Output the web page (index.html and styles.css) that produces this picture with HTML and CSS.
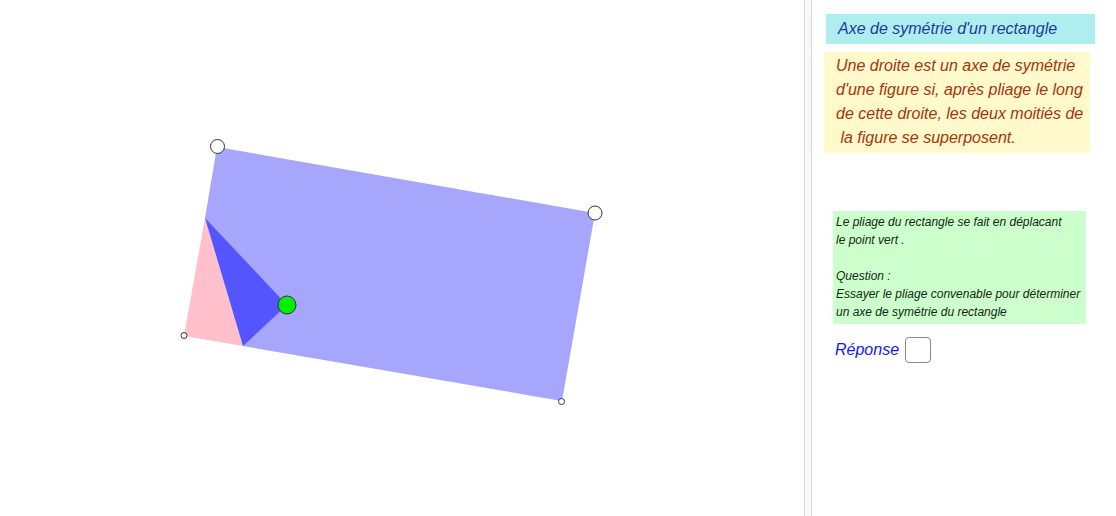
FILE: index.html
```html
<!DOCTYPE html>
<html lang="fr">
<head>
<meta charset="utf-8">
<link rel="stylesheet" href="styles.css">
</head>
<body>
<div class="app">
  <div class="canvas">
    <svg width="804" height="516" viewBox="0 0 804 516">
      <polygon points="217,147 595,213 562,401 243,346 205,218" fill="#a6a6fd"/>
      <polygon points="205,218 184,336 243,346" fill="#ffc0cb"/>
      <polygon points="205,218 287,305 243,346" fill="#5555fd"/>
      <circle cx="217.5" cy="146.5" r="7" fill="#fff" stroke="#333" stroke-width="1"/>
      <circle cx="595" cy="213" r="7" fill="#fff" stroke="#333" stroke-width="1"/>
      <circle cx="184" cy="335.5" r="3" fill="#fff" stroke="#333" stroke-width="1"/>
      <circle cx="561.5" cy="401.5" r="3" fill="#fff" stroke="#333" stroke-width="1"/>
      <circle cx="287" cy="305" r="9" fill="#00ee00" stroke="#333" stroke-width="1"/>
    </svg>
  </div>
  <div class="divider"></div>
  <div class="panel">
    <div class="title">Axe de symétrie d'un rectangle</div>
    <div class="definition">Une droite est un axe de symétrie<br>d'une figure si, après pliage le long<br>de cette droite, les deux moitiés de<br>&nbsp;la figure se superposent.</div>
    <div class="note">Le pliage du rectangle se fait en déplacant<br>le point vert .<br><br>Question :<br>Essayer le pliage convenable pour déterminer<br>un axe de symétrie du rectangle</div>
    <div class="answer"><span class="answer-label">Réponse</span><span class="answer-box"></span></div>
  </div>
</div>
</body>
</html>
```
FILE: styles.css
```css
html, body {
  margin: 0;
  padding: 0;
  background: #fff;
}
.app {
  display: flex;
  width: 1116px;
  height: 516px;
  overflow: hidden;
  font-family: "Liberation Sans", Arial, sans-serif;
}
.canvas {
  width: 804px;
  height: 516px;
  flex: none;
}
.canvas svg {
  display: block;
}
.divider {
  width: 6px;
  flex: none;
  border-left: 1px solid #d6d6d6;
  border-right: 1px solid #d6d6d6;
  background: #f7f7f7;
}
.panel {
  flex: 1;
  padding-top: 14px;
}
.title {
  margin-left: 14px;
  width: 257px;
  height: 30px;
  line-height: 30px;
  padding-left: 12px;
  background: #afeeee;
  color: #1a3c9e;
  font-size: 16px;
  font-style: italic;
}
.definition {
  margin-top: 8px;
  margin-left: 12px;
  width: 254px;
  height: 98px;
  padding: 2px 0 1px 12px;
  background: #fff9cc;
  color: #a3360c;
  font-size: 16px;
  font-style: italic;
  line-height: 24px;
}
.note {
  margin-top: 58px;
  margin-left: 21px;
  width: 250px;
  height: 108px;
  padding: 2px 0 3px 3px;
  background: #ccffcc;
  color: #142814;
  font-size: 12px;
  font-style: italic;
  line-height: 18px;
  white-space: nowrap;
}
.answer {
  display: flex;
  align-items: center;
  margin-top: 12px;
  margin-left: 23px;
  height: 28px;
}
.answer-label {
  color: #1515ff;
  font-size: 16px;
  font-style: italic;
}
.answer-box {
  margin-left: 6px;
  width: 24px;
  height: 24px;
  border: 1px solid #888;
  border-radius: 4px;
  background: #fff;
}
```
